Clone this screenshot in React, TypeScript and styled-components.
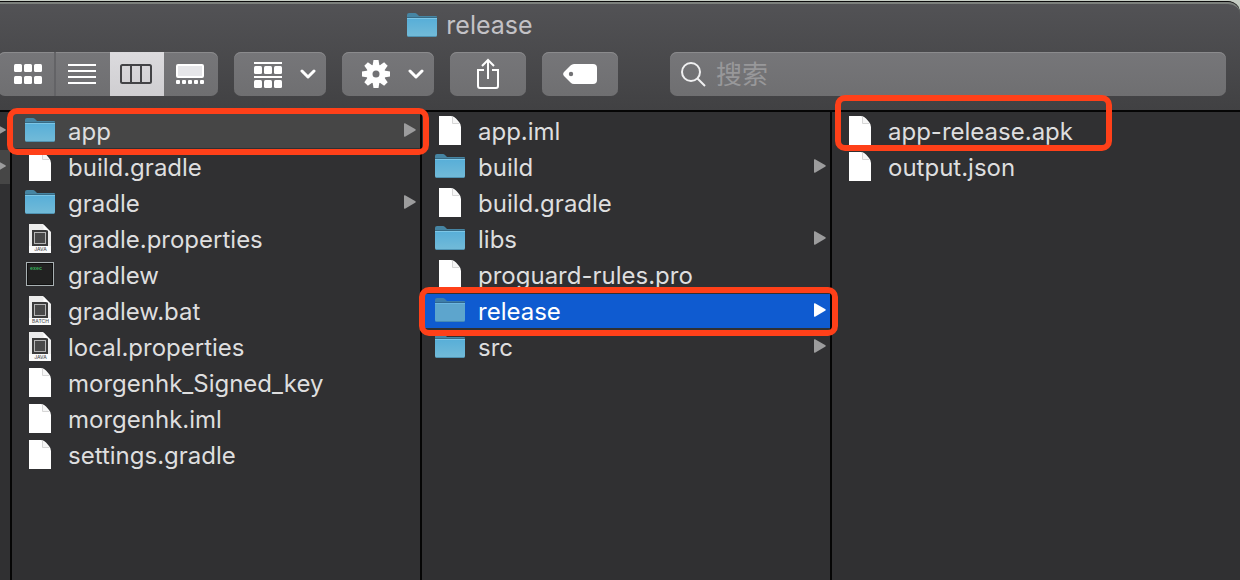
import React from 'react';
import styled, { createGlobalStyle, css } from 'styled-components';

const GlobalStyle = createGlobalStyle`
  *, *::before, *::after { box-sizing: border-box; }
  html, body, #root { height: 100%; }
  body {
    margin: 0;
    background: #c6cdc4;
    color: #dededf;
    font-family: Inter, Roboto, "Noto Sans CJK SC", sans-serif;
    font-size: 24px;
    overflow: hidden;
  }
  button, input { font: inherit; color: inherit; }
`;

const Desktop = styled.div`
  height: 100%;
  padding-top: 1px;
`;

const Window = styled.main`
  height: 100%;
  display: flex;
  flex-direction: column;
  border-top: 1px solid #0c0c0c;
  border-radius: 0 12px 0 0;
  background: #303032;
`;

const Header = styled.header`
  border-top: 2px solid #7c807c;
  border-bottom: 2px solid #050505;
  border-radius: 0 12px 0 0;
  background: linear-gradient(#525255, #414143);
`;

const TitleBar = styled.div`
  height: 48px;
  display: flex;
  align-items: center;
  justify-content: center;
  gap: 9px;
  padding-right: 300px;
  padding-bottom: 6px;
`;

const Title = styled.h1`
  margin: 0;
  font-size: 25px;
  line-height: 30px;
  font-weight: 400;
  color: #c3c2c6;
`;

const Toolbar = styled.div`
  display: flex;
  gap: 16px;
  padding: 0 14px 14px 0;
`;

const raised = css`
  height: 44px;
  border-radius: 7px;
  background: linear-gradient(#767679, #6f6f71);
  box-shadow: inset 0 1px #8b8b8d;
`;

const SegmentGroup = styled.div`
  ${raised}
  display: flex;
  overflow: hidden;
  margin-left: -2px;
`;

const Segment = styled.button<{ $active?: boolean; $divided?: boolean }>`
  width: ${p => (p.$divided ? 58 : 54)}px;
  padding: ${p => (p.$divided ? '0 0 0 4px' : '0 2px 0 0')};
  border: 0;
  border-right: ${p => (p.$divided ? '2px solid #636366' : '0')};
  display: flex;
  align-items: center;
  justify-content: center;
  background: ${p => (p.$active ? 'linear-gradient(#dcdbde, #cfced1)' : 'none')};
`;

const ToolButton = styled.button<{ $menu?: boolean }>`
  ${raised}
  width: ${p => (p.$menu ? 92 : 76)}px;
  border: 0;
  padding: ${p => (p.$menu ? '0 10px 0 20px' : '0')};
  display: flex;
  align-items: center;
  justify-content: ${p => (p.$menu ? 'space-between' : 'center')};
`;

const SearchField = styled.label`
  ${raised}
  flex: 1;
  margin-left: 36px;
  display: flex;
  align-items: center;
  gap: 10px;
  padding: 0 10px;
`;

const SearchInput = styled.input`
  flex: 1;
  min-width: 0;
  padding: 0;
  border: 0;
  outline: 0;
  background: none;
  font-size: 26px;
  &::placeholder { color: #98989a; opacity: 1; }
`;

const Browser = styled.div`
  flex: 1;
  display: flex;
  min-height: 0;
`;

const Column = styled.ul<{ $size: 'edge' | 'normal' | 'rest' }>`
  list-style: none;
  margin: 0;
  padding: 2px 0 0;
  min-width: 0;
  display: flex;
  flex-direction: column;
  gap: 2px;
  flex: ${p => ({ edge: '0 0 12px', normal: '0 0 410px', rest: '1 1 0' })[p.$size]};
  border-right: ${p => (p.$size === 'rest' ? '0' : '2px solid #050505')};
`;

const Item = styled.li`
  position: relative;
  height: 34px;
`;

const backgrounds = { none: 'none', path: '#464646', current: '#0f5bd0' };

const Row = styled.button<{ $state: keyof typeof backgrounds }>`
  width: 100%;
  height: 34px;
  border: 0;
  padding: 0 4px 2px 13px;
  display: flex;
  align-items: center;
  gap: 13px;
  text-align: left;
  background: ${p => backgrounds[p.$state]};
  color: ${p => (p.$state === 'current' ? '#fff' : '#dededf')};
`;

const EdgeRow = styled(Row)`
  justify-content: flex-end;
  padding-left: 0;
`;

const IconSlot = styled.span`
  width: 30px;
  flex: none;
  display: flex;
  justify-content: center;
`;

const Name = styled.span`
  flex: 1;
  line-height: 30px;
  padding-top: 4px;
  white-space: nowrap;
`;

const Highlight = styled.span<{ $inset: string }>`
  position: absolute;
  z-index: 2;
  inset: ${p => p.$inset};
  border: 6px solid #ff4019;
  border-radius: 10px;
  pointer-events: none;
`;

const RightHighlight = styled(Highlight)`
  width: 277px;
`;

const ArrowSvg = styled.svg`
  flex: none;
`;

const FolderIcon = ({ dim }: { dim?: boolean }) => (
  <svg width="30" height="24" viewBox="0 0 30 24" aria-hidden="true" opacity={dim ? 0.85 : 1}>
    <defs>
      <linearGradient id="folder" x1="0" y1="0" x2="0" y2="1">
        <stop offset="0" stopColor="#57aed8" />
        <stop offset="1" stopColor="#73bbd8" />
      </linearGradient>
    </defs>
    <path d="M0 2Q0 0 2 0H8Q9 0 10 1L12 3H29Q30 3 30 4V8H0Z" fill="#4685a3" />
    <path d="M0 5H30V22Q30 24 28 24H2Q0 24 0 22Z" fill={dim ? '#6bb3cd' : 'url(#folder)'} />
    <path d="M0 4.500H30" stroke="#376b85" />
    <path d="M0 5.500H30" stroke="#7cc6e6" />
    <path d="M1 23.500H29" stroke="#4f93b3" />
  </svg>
);

const FileIcon = () => (
  <svg width="22" height="29" viewBox="0 0 22 29" aria-hidden="true">
    <path d="M0 0H12Q15 0 17 2.500L20 6Q22 8 22 11V29H0Z" fill="#fff" />
    <path d="M13.500 0.500V7.500H20.500" fill="#f6f6f6" stroke="#d6d6d6" />
  </svg>
);

const CodeIcon = ({ label }: { label: string }) => (
  <svg width="22" height="29" viewBox="0 0 22 29" aria-hidden="true">
    <path d="M0 0H14L22 8V29H0Z" fill="#ececec" />
    <rect y="22" width="22" height="7" fill="#fafafa" />
    <rect x="3" y="6" width="16" height="16" fill="#3b3b3b" />
    <path d="M14.500 0.500V5.500Q18 5.500 21.500 8Z" fill="#fff" />
    <rect x="5.500" y="8.500" width="11" height="11" fill="#484848" stroke="#b5b5b5" />
    <text x="11.500" y="27" textAnchor="middle" fontSize="5" fontWeight="500" fill="#555">{label}</text>
  </svg>
);

const ExecIcon = () => (
  <svg width="28" height="24" viewBox="0 0 28 24" aria-hidden="true">
    <rect x="0.500" y="0.500" width="27" height="23" fill="#222" stroke="#a9b1b3" />
    <rect x="1.500" y="1.500" width="25" height="21" fill="none" stroke="#111" />
    <text x="4" y="8" fontSize="5" fontWeight="700" fill="#36b25a" fontFamily="Liberation Mono, monospace">exec</text>
  </svg>
);

const Arrow = ({ bright }: { bright?: boolean }) => (
  <ArrowSvg width="12" height="14" viewBox="0 0 12 14" aria-hidden="true">
    <path d="M0 1Q0 0 1 0.300L11.500 6.300Q12 7 11.500 7.600L1 13.700Q0 14 0 13Z" fill={bright ? '#fff' : '#9c9c9d'} />
  </ArrowSvg>
);

const Chevron = () => (
  <svg width="16" height="10" viewBox="0 0 16 10" fill="none" stroke="#fff" strokeWidth="3" strokeLinecap="round" strokeLinejoin="round" aria-hidden="true">
    <path d="M2 2L8 8L14 2" />
  </svg>
);

const GridIcon = () => (
  <svg width="28" height="20" viewBox="0 0 28 20" fill="#fff" aria-hidden="true">
    {[0, 12].map(y => [0, 10, 20].map(x => <rect key={`${x}-${y}`} x={x} y={y} width="8" height="8" rx="1.500" />))}
  </svg>
);

const ListIcon = () => (
  <svg width="28" height="20" viewBox="0 0 28 20" fill="#fff" aria-hidden="true">
    {[0, 6, 12, 18].map(y => <rect key={y} y={y} width="28" height="2" />)}
  </svg>
);

const ColumnsIcon = () => (
  <svg width="32" height="20" viewBox="0 0 32 20" fill="none" stroke="#434346" strokeWidth="2" aria-hidden="true">
    <rect x="1" y="1" width="30" height="18" rx="1.500" />
    <path d="M11 1V19M21 1V19" />
  </svg>
);

const GalleryIcon = () => (
  <svg width="28" height="20" viewBox="0 0 28 20" fill="#fff" aria-hidden="true">
    <rect x="1" y="1" width="26" height="12" rx="1" fill="#e6e6e9" stroke="#fff" strokeWidth="2" />
    {[0, 6, 12, 18, 24].map(x => <rect key={x} x={x} y="16" width="4" height="4" rx="1" />)}
  </svg>
);

const GroupIcon = () => (
  <svg width="28" height="28" viewBox="0 -2 28 28" fill="#fff" aria-hidden="true">
    <rect width="28" height="2" />
    <rect y="14" width="28" height="2" />
    {[4, 18].map(y => [0, 10, 20].map(x => <rect key={`${x}-${y}`} x={x} y={y} width="8" height="8" rx="1.500" />))}
  </svg>
);

const GearIcon = () => (
  <svg width="28" height="28" viewBox="-14 -14 28 28" aria-hidden="true">
    {[0, 45, 90, 135].map(a => (
      <path key={a} d="M-2.500 -14H2.500L3.500 -8V8L2.500 14H-2.500L-3.500 8V-8Z" fill="#fff" transform={`rotate(${a})`} />
    ))}
    <circle r="9.500" fill="#fff" />
    <circle r="3.500" fill="#727275" />
  </svg>
);

const ShareIcon = () => (
  <svg width="22" height="32" viewBox="0 0 22 32" fill="none" stroke="#fff" strokeWidth="2" aria-hidden="true">
    <path d="M7 12H1V28Q1 30 3 30H19Q21 30 21 28V12H15" />
    <path d="M11 21V2M5 8L11 2L17 8" />
  </svg>
);

const TagIcon = () => (
  <svg width="34" height="20" viewBox="0 0 34 20" aria-hidden="true">
    <path d="M11 0H30Q34 0 34 4V16Q34 20 30 20H11Q9 20 7.500 18.500L1 12Q-0.700 10 1 8L7.500 1.500Q9 0 11 0Z" fill="#fff" />
    <circle cx="8" cy="10" r="2.200" fill="#727275" />
  </svg>
);

const SearchIcon = () => (
  <svg width="26" height="26" viewBox="0 0 26 26" fill="none" stroke="#f0f0f1" strokeWidth="2" aria-hidden="true">
    <circle cx="11" cy="11" r="9" />
    <path d="M17.500 17.500L25 25" />
  </svg>
);

type Kind = 'folder' | 'file' | 'java' | 'batch' | 'exec';
type Entry = { name: string; kind: Kind; state?: 'path' | 'current'; ring?: string };

const projectFiles: Entry[] = [
  { name: 'app', kind: 'folder', state: 'path', ring: '-6px -9px -7px -5px' },
  { name: 'build.gradle', kind: 'file' },
  { name: 'gradle', kind: 'folder' },
  { name: 'gradle.properties', kind: 'java' },
  { name: 'gradlew', kind: 'exec' },
  { name: 'gradlew.bat', kind: 'batch' },
  { name: 'local.properties', kind: 'java' },
  { name: 'morgenhk_Signed_key', kind: 'file' },
  { name: 'morgenhk.iml', kind: 'file' },
  { name: 'settings.gradle', kind: 'file' },
];

const appFiles: Entry[] = [
  { name: 'app.iml', kind: 'file' },
  { name: 'build', kind: 'folder' },
  { name: 'build.gradle', kind: 'file' },
  { name: 'libs', kind: 'folder' },
  { name: 'proguard-rules.pro', kind: 'file' },
  { name: 'release', kind: 'folder', state: 'current', ring: '-7px -8px -8px -3px' },
  { name: 'src', kind: 'folder' },
];

const releaseFiles: Entry[] = [
  { name: 'app-release.apk', kind: 'file', ring: '-19px auto -3px 3px' },
  { name: 'output.json', kind: 'file' },
];

const EntryIcon = ({ entry }: { entry: Entry }) => {
  switch (entry.kind) {
    case 'folder': return <FolderIcon dim={entry.state === 'current'} />;
    case 'java': return <CodeIcon label="JAVA" />;
    case 'batch': return <CodeIcon label="BATCH" />;
    case 'exec': return <ExecIcon />;
    default: return <FileIcon />;
  }
};

const FileColumn = ({ entries, size, label }: { entries: Entry[]; size: 'normal' | 'rest'; label: string }) => {
  const Ring = size === 'rest' ? RightHighlight : Highlight;
  return (
    <Column $size={size} aria-label={label}>
      {entries.map(entry => (
        <Item key={entry.name}>
          <Row type="button" $state={entry.state ?? 'none'}>
            <IconSlot><EntryIcon entry={entry} /></IconSlot>
            <Name>{entry.name}</Name>
            {entry.kind === 'folder' && <Arrow bright={entry.state === 'current'} />}
          </Row>
          {entry.ring && <Ring $inset={entry.ring} />}
        </Item>
      ))}
    </Column>
  );
};

export default function App() {
  return (
    <Desktop>
      <GlobalStyle />
      <Window>
        <Header>
          <TitleBar>
            <FolderIcon />
            <Title>release</Title>
          </TitleBar>
          <Toolbar>
            <SegmentGroup role="group" aria-label="View">
              <Segment type="button" $divided aria-label="Icons"><GridIcon /></Segment>
              <Segment type="button" aria-label="List"><ListIcon /></Segment>
              <Segment type="button" $active aria-pressed="true" aria-label="Columns"><ColumnsIcon /></Segment>
              <Segment type="button" aria-label="Gallery"><GalleryIcon /></Segment>
            </SegmentGroup>
            <ToolButton type="button" $menu aria-label="Group"><GroupIcon /><Chevron /></ToolButton>
            <ToolButton type="button" $menu aria-label="Actions"><GearIcon /><Chevron /></ToolButton>
            <ToolButton type="button" aria-label="Share"><ShareIcon /></ToolButton>
            <ToolButton type="button" aria-label="Tags"><TagIcon /></ToolButton>
            <SearchField>
              <SearchIcon />
              <SearchInput type="text" placeholder="搜索" aria-label="搜索" />
            </SearchField>
          </Toolbar>
        </Header>
        <Browser>
          <Column $size="edge" aria-label="Parent folder">
            <Item><EdgeRow type="button" $state="none" aria-label="Folder"><Arrow /></EdgeRow></Item>
            <Item><EdgeRow type="button" $state="path" aria-label="Open folder"><Arrow /></EdgeRow></Item>
          </Column>
          <FileColumn entries={projectFiles} size="normal" label="Project" />
          <FileColumn entries={appFiles} size="normal" label="app" />
          <FileColumn entries={releaseFiles} size="rest" label="release" />
        </Browser>
      </Window>
    </Desktop>
  );
}
